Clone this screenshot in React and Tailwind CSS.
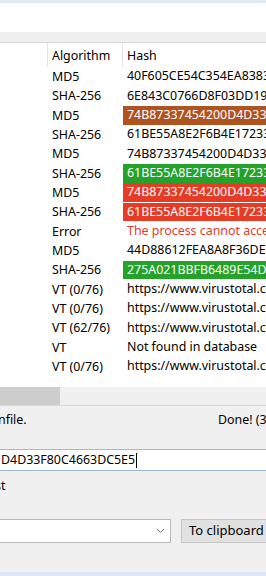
import React from "react";

const rows = [
  ["MD5", "40F605CE54C354EA83833D4B2A6E5C1F", ""],
  ["SHA-256", "6E843C0766D8F03DD19C4E2A77B1D0E9", ""],
  ["MD5", "74B87337454200D4D33F80C4663DC5E5", "bg-[#b0531f] text-white"],
  ["SHA-256", "61BE55A8E2F6B4E17233D7C9A0E1B4F2", ""],
  ["MD5", "74B87337454200D4D33F80C4663DC5E5", ""],
  ["SHA-256", "61BE55A8E2F6B4E17233D7C9A0E1B4F2", "bg-[#25a22a] text-white"],
  ["MD5", "74B87337454200D4D33F80C4663DC5E5", "bg-[#e63c25] text-white"],
  ["SHA-256", "61BE55A8E2F6B4E17233D7C9A0E1B4F2", "bg-[#e63c25] text-white"],
  ["Error", "The process cannot access the file", "text-[#e8392c]"],
  ["MD5", "44D88612FEA8A8F36DE82E1278ABB02F", ""],
  ["SHA-256", "275A021BBFB6489E54D471899F7DB9D1", "bg-[#25a22a] text-white"],
  ["VT (0/76)", "https://www.virustotal.com/gui/file", ""],
  ["VT (0/76)", "https://www.virustotal.com/gui/file", ""],
  ["VT (62/76)", "https://www.virustotal.com/gui/file", ""],
  ["VT", "Not found in database", ""],
  ["VT (0/76)", "https://www.virustotal.com/gui/file", ""],
];

export default function App() {
  return (
    <div
      className="w-[266px] h-[576px] overflow-hidden flex flex-col bg-[#f0f0f0] text-[12.4px] text-black whitespace-nowrap"
      style={{ fontFamily: '"Noto Sans", "Open Sans", sans-serif' }}
    >
      <div className="h-[3px] bg-[#dde9f4] shrink-0" />
      <div className="h-[29px] bg-white shrink-0" />
      <div className="h-[11px] bg-[#f0f0f0] border-b border-[#d6d6d6] shrink-0" />
      {/* list view */}
      <div className="h-[344px] bg-white shrink-0 flex flex-col overflow-hidden">
        <div className="h-[24px] flex items-center shrink-0">
          <div className="w-[48px] h-full border-r border-[#e5e5e5]" />
          <div className="w-[75px] h-full border-r border-[#e5e5e5] pl-[4px] pt-[3px] flex items-center">Algorithm</div>
          <div className="flex-1 h-full pl-[4px] pt-[3px] flex items-center">Hash</div>
        </div>
        {rows.map(([a, h, cls], i) => (
          <div key={i} className="h-[19.33px] flex items-center shrink-0">
            <div className="w-[48px] shrink-0" />
            <div className="w-[75px] shrink-0 pl-[4px] leading-[19px]">{a}</div>
            <div className={`flex-1 h-[18.5px] pl-[4px] flex items-center overflow-hidden ${cls}`}>{h}</div>
          </div>
        ))}
      </div>
      {/* horizontal scrollbar */}
      <div className="h-[19px] flex bg-[#f0f0f0] border-b border-[#d9d9d9] shrink-0">
        <div className="w-[60px] h-full bg-[#cdcdcd]" />
      </div>
      {/* status */}
      <div className="h-[28px] flex items-center justify-between shrink-0 overflow-hidden">
        <span className="-ml-[2px]">nfile.</span>
        <span className="w-[48px] overflow-hidden">Done! (3 files)</span>
      </div>
      <div className="h-[15px] shrink-0" />
      {/* textbox */}
      <div className="h-[22px] bg-white border-y border-[#9dbad6] flex items-center shrink-0 pl-[1px]">
        <span>D4D33F80C4663DC5E5</span>
        <span className="w-px h-[15px] bg-black ml-[1px]" />
      </div>
      <div className="h-[30px] flex items-center shrink-0">
        <span className="-ml-[5px]">st</span>
      </div>
      <div className="h-[18px] shrink-0" />
      {/* combo + button */}
      <div className="h-[24px] flex shrink-0">
        <div className="w-[171px] h-full bg-white border border-l-0 border-[#b9b9b9] flex items-center justify-end pr-[4px]">
          <svg width="9" height="6" viewBox="0 0 9 6" className="mr-[1px]">
            <path d="M1 1 L4.5 4.5 L8 1" fill="none" stroke="#707070" strokeWidth="1" />
          </svg>
        </div>
        <div className="ml-[10px] flex-1 h-full bg-[#e1e1e1] border border-r-0 border-[#c6c6c6] flex items-center pl-[7px] text-[13px]">
          To clipboard
        </div>
      </div>
      <div className="h-[29px] shrink-0" />
      <div className="flex-1 bg-[#dbe8f5]" />
    </div>
  );
}
